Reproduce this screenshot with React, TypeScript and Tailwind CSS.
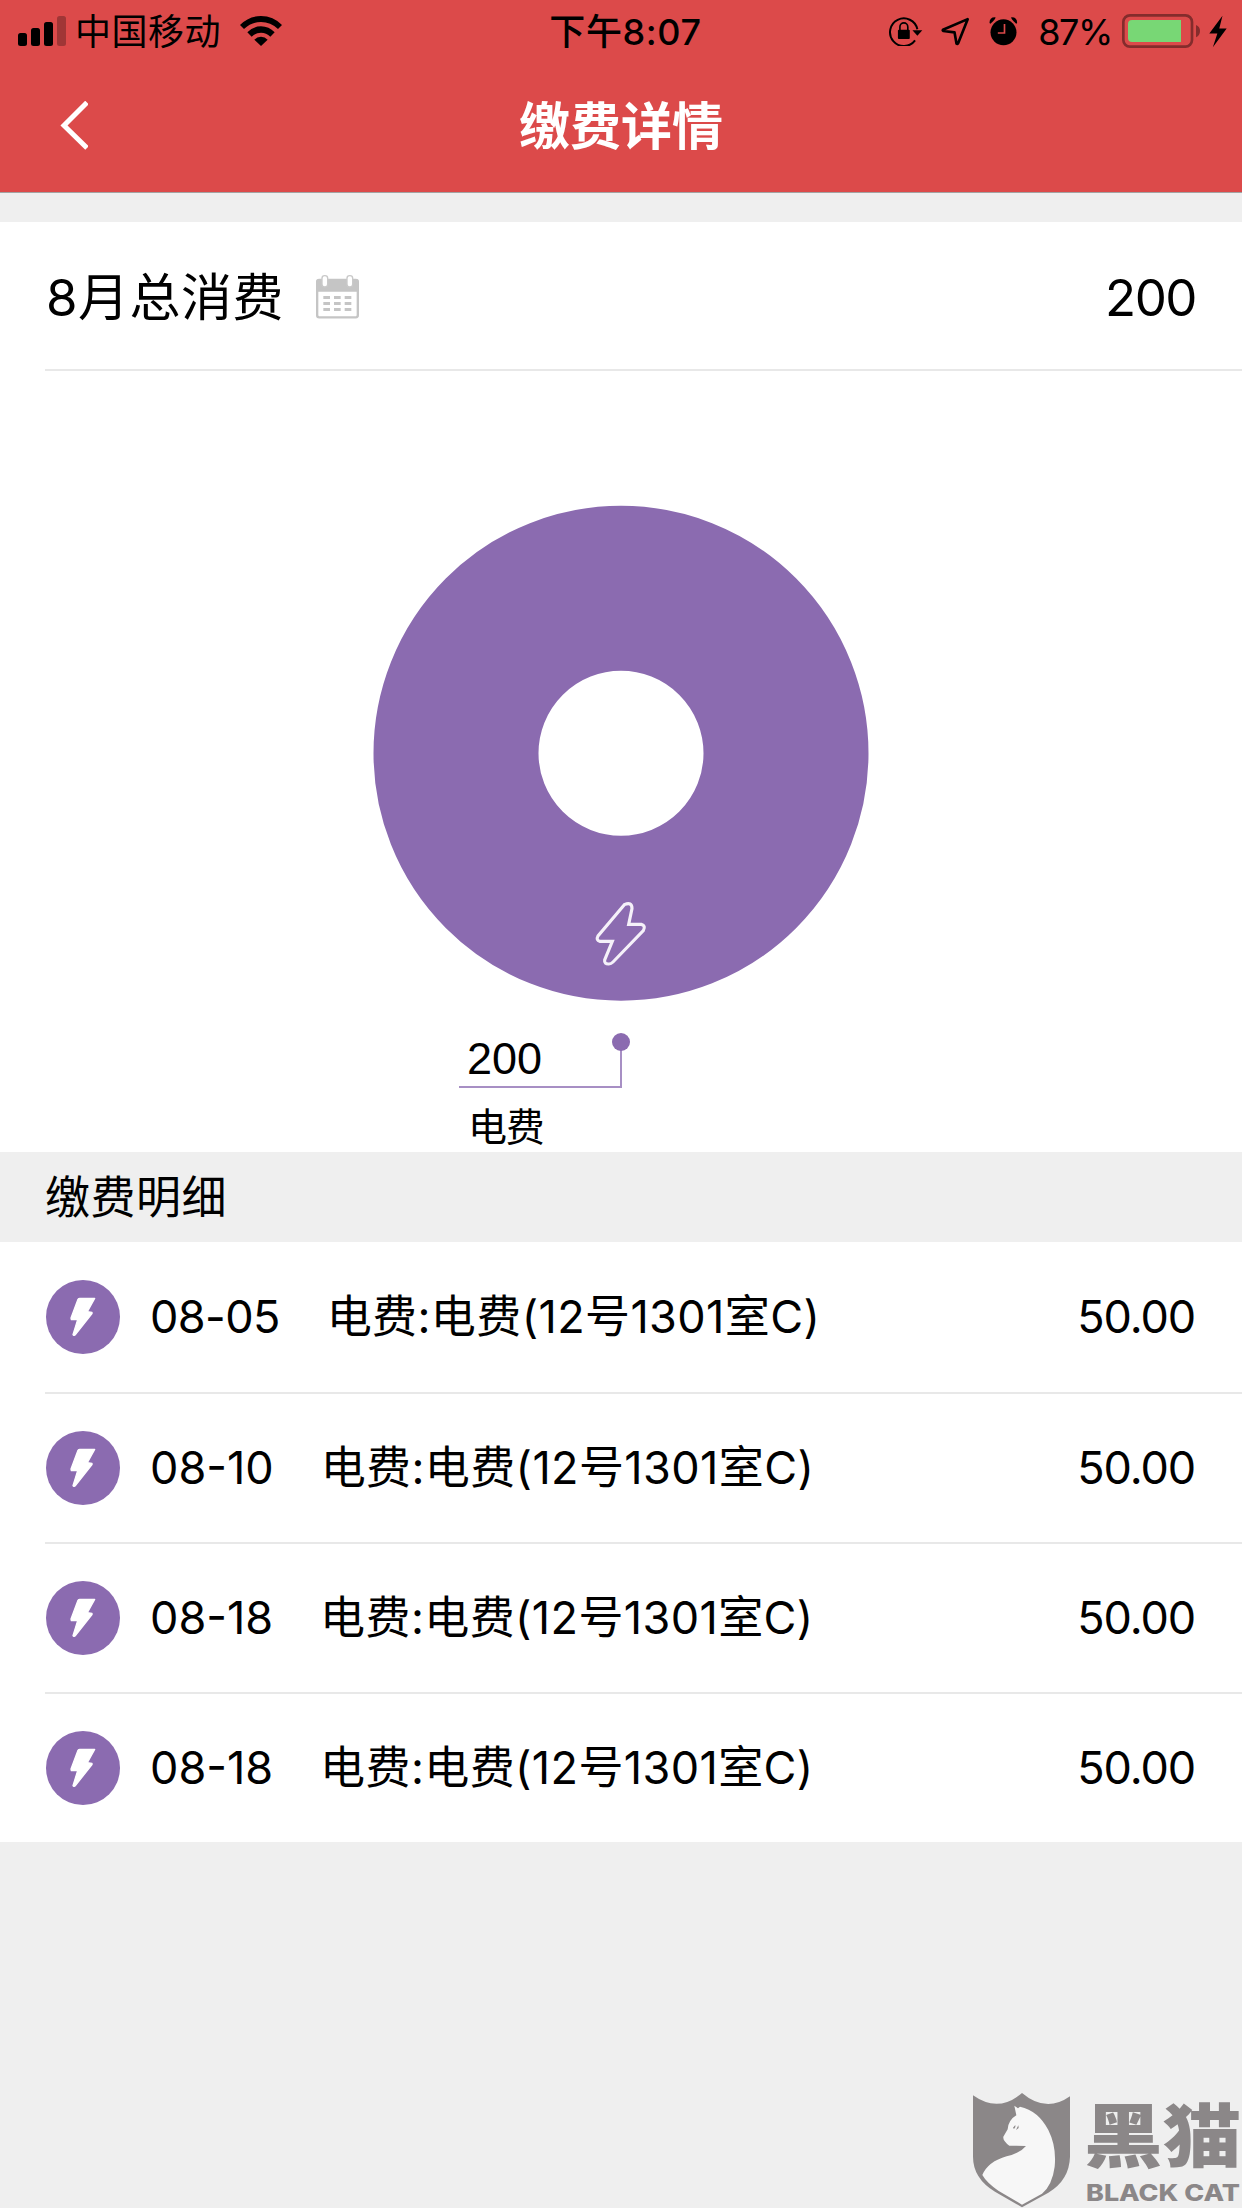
import React from 'react';

interface Payment {
  id: number;
  date: string;
  title: string;
  amount: string;
}

const payments: Payment[] = [
  { id: 1, date: '08-05', title: '电费:电费(12号1301室C)', amount: '50.00' },
  { id: 2, date: '08-10', title: '电费:电费(12号1301室C)', amount: '50.00' },
  { id: 3, date: '08-18', title: '电费:电费(12号1301室C)', amount: '50.00' },
  { id: 4, date: '08-18', title: '电费:电费(12号1301室C)', amount: '50.00' },
];

function SignalIcon() {
  return (
    <svg width="48" height="30" viewBox="0 0 48 30">
      <rect x="0" y="17" width="9" height="13" rx="2.5" />
      <rect x="13" y="12" width="9" height="18" rx="2.5" />
      <rect x="26" y="6" width="9" height="24" rx="2.5" />
      <rect x="39" y="0" width="9" height="30" rx="2.5" opacity="0.27" />
    </svg>
  );
}

function WifiIcon() {
  return (
    <svg width="42" height="30" viewBox="720 45 126 90">
      <path d="M720 72Q746 45 783 45T846 72L834 84Q812 63 783 63T732 84Z" />
      <path d="M742 94Q759 76 783 76T824 94L811 107Q799 95 783 95T755 107Z" />
      <path d="M763 116Q771 107 783 107T803 116L783 135Z" />
    </svg>
  );
}

function RotationLockIcon() {
  return (
    <svg width="35" height="30" viewBox="58 44 104 91">
      <path d="M139 118A42 42 0 1 1 146 84" fill="none" stroke="#000" strokeWidth="6" />
      <path d="M131 87H161L146 104Z" />
      <rect x="87" y="86" width="36" height="28" rx="3" />
      <path d="M93 88V77A12 12 0 0 1 117 77V88" fill="none" stroke="#000" strokeWidth="5" />
    </svg>
  );
}

function LocationIcon() {
  return (
    <svg width="29" height="29" viewBox="218 48 88 87">
      <path
        d="M299 54L224 86Q222 89 225 90L259 94L265 128Q268 131 270 127Z"
        fill="none"
        stroke="#000"
        strokeWidth="8"
        strokeLinejoin="round"
      />
    </svg>
  );
}

function AlarmIcon() {
  return (
    <svg width="29" height="30" viewBox="365 44 86 90">
      <circle cx="408" cy="93" r="39" />
      <path d="M366 65Q366 47 384 48Q385 53 369 67Z" />
      <path d="M449 65Q449 47 431 48Q430 53 446 67Z" />
      <path d="M391 95H411V68" fill="none" stroke="#dc4a4a" strokeWidth="5" />
    </svg>
  );
}

function BatteryIcon() {
  return (
    <svg width="78" height="34" viewBox="756 39 234 102">
      <rect x="760" y="43" width="206" height="94" rx="20" fill="none" stroke="#842c2c" strokeWidth="8" />
      <path d="M978 72Q990 77 990 90T978 109Z" fill="#842c2c" />
      <path d="M933 57V123H786Q774 123 774 111V69Q774 57 786 57Z" fill="#78d775" />
    </svg>
  );
}

function ChargeIcon() {
  return (
    <svg width="18" height="33" viewBox="1016 42 56 98">
      <path d="M1058 42L1017 97H1042L1028 140L1071 82H1048Z" />
    </svg>
  );
}

function CalendarIcon() {
  return (
    <svg width="43" height="44" viewBox="950 165 129 132">
      <rect x="953.5" y="180" width="122" height="112" rx="6" fill="#fff" stroke="#c5c5c5" strokeWidth="7" />
      <path d="M951 215V184Q951 178 958 178H1071Q1078 178 1078 184V215Z" fill="#c5c5c5" />
      <rect x="968" y="167" width="17" height="34" rx="8" fill="#fff" stroke="#c9c9c9" strokeWidth="4" />
      <rect x="1043" y="167" width="17" height="34" rx="8" fill="#fff" stroke="#c9c9c9" strokeWidth="4" />
      {[228, 246, 264].map((y) => (
        <g key={y} fill="#c5c5c5">
          <rect x="972" y={y} width="20" height="9" />
          <rect x="1004" y={y} width="20" height="9" />
          <rect x="1036" y={y} width="20" height="9" />
        </g>
      ))}
    </svg>
  );
}

function PowerIcon() {
  return (
    <svg className="shrink-0" width="74" height="74" viewBox="0 0 222 222">
      <circle cx="111" cy="111" r="111" fill="#8b6bb0" />
      <path
        d="M101 55H146L124 95L138 97L138 101L87 165Q82 168 81 164L95 119H76L75 114L96 58Q98 55 101 55Z"
        fill="#fff"
        stroke="#fff"
        strokeWidth="4"
        strokeLinejoin="round"
      />
    </svg>
  );
}

function StatusBar() {
  return (
    <div className="grid h-[60px] grid-cols-3 items-center text-[36px] leading-[60px] text-black">
      <div className="flex items-center pl-[18px]">
        <SignalIcon />
        <span className="ml-[9px] pt-[2px] tracking-[0.5px]">中国移动</span>
        <span className="ml-[19px]">
          <WifiIcon />
        </span>
      </div>
      <div className="pl-[9px] pt-[2px] text-center font-medium tracking-[0.6px]">下午8:07</div>
      <div className="flex items-center justify-end pr-[15px]">
        <RotationLockIcon />
        <span className="ml-[18px]">
          <LocationIcon />
        </span>
        <span className="ml-[19px]">
          <AlarmIcon />
        </span>
        <span className="ml-[20px] mr-[10px] pt-[2px] tracking-[-1.4px]">87%</span>
        <BatteryIcon />
        <span className="ml-[9px]">
          <ChargeIcon />
        </span>
      </div>
    </div>
  );
}

function DonutChart() {
  return (
    <div className="flex h-[781px] flex-col items-center pt-[134px]">
      <svg className="shrink-0" width="496" height="496" viewBox="0 0 496 496">
        <circle cx="248" cy="248.25" r="165" fill="none" stroke="#8b6bb0" strokeWidth="165" />
        {/* 电费 slice icon */}
        <path
          transform="translate(222 396) scale(.33333) translate(-465 -120)"
          d="M553 131L474 225Q467 238 480 241H517L494 297Q492 310 507 309Q513 309 519 303L610 209Q618 193 604 190H566L576 143Q576 121 553 131Z"
          fill="none"
          stroke="#f5f1f9"
          strokeWidth="9.5"
        />
      </svg>
      <div className="flex h-[120px] w-[324px] shrink-0 pt-[31px]">
        <div className="w-[153px]">
          <div className="h-[56px] border-b-2 border-[#a78fc4] pl-[8px] font-['Liberation_Sans'] text-[45px] leading-[54px]">
            200
          </div>
          <div className="pl-[9px] pt-[10px] text-[39px] leading-[58px] tracking-[-1.2px]">电费</div>
        </div>
        <svg width="18" height="56" viewBox="0 0 18 56">
          <path d="M0 55H9V10" fill="none" stroke="#a78fc4" strokeWidth="2" />
          <circle cx="9" cy="10" r="9" fill="#8b6bb0" />
        </svg>
      </div>
    </div>
  );
}

function PaymentRow({ payment, first }: { payment: Payment; first: boolean }) {
  return (
    <div
      className={`ml-[45px] flex h-[150px] items-center pl-px pr-[47px] text-[45px] ${
        first ? '' : 'border-t-2 border-[#e8e8e8]'
      }`}
    >
      <PowerIcon />
      <span className={`ml-[30px] ${first ? 'tracking-[-0.6px]' : 'tracking-[0px]'}`}>{payment.date}</span>
      <span className="ml-[47px] tracking-[0.4px]">{payment.title}</span>
      <span className="ml-auto tracking-[-1.1px]">{payment.amount}</span>
    </div>
  );
}

function Watermark() {
  return (
    <div className="flex h-[115px] w-[269px]">
      <svg width="97" height="115" viewBox="99 69 291 345">
        <path
          d="M99 76Q175 130 246 69Q318 130 390 79V260Q388 330 325 368L246 412L165 365Q99 325 99 260Z"
          fill="#8b8788"
        />
        <path
          d="M229 136L223 107L234 115L240 110Q295 122 325 180Q350 230 344 290Q337 345 306 371L246 404L175 362Q140 338 127 315Q144 275 200 259Q240 250 258 228L208 227Q188 212 190 200L203 178Q205 150 229 136Z"
          fill="#f7f7f7"
        />
        <path d="M219 173L226 165V171L222 177ZM228 180L235 166L236 174Z" fill="#8b8788" />
      </svg>
      <div className="ml-[16px] flex w-[156px] flex-col text-[#8b8788]">
        <span className="h-[87px] w-[138px] origin-left -translate-x-[2px] scale-x-[1.14] text-[69px] font-black leading-[89px]">
          黑猫
        </span>
        <span className="h-[26px] origin-left scale-x-[1.17] whitespace-nowrap text-[23px] font-extrabold leading-[26px]">
          BLACK CAT
        </span>
      </div>
    </div>
  );
}

export default function App() {
  return (
    <div className="flex h-[2208px] w-[1242px] flex-col overflow-hidden bg-[#efefef] font-['Inter','Noto_Sans_CJK_SC',sans-serif] text-black">
      <header className="h-[193px] border-b border-[#a3a3a3] bg-[#dc4a4a]">
        <StatusBar />
        <div className="grid h-[132px] grid-cols-3 items-center">
          <svg className="ml-[60px]" width="28" height="50" viewBox="0 0 28 50">
            <path d="M27 1.500L4 24.500L27 47" fill="none" stroke="#fff" strokeWidth="5" />
          </svg>
          <h1 className="pt-[2px] text-center text-[51px] font-bold leading-[130px] text-white">缴费详情</h1>
        </div>
      </header>

      <section className="mt-[29px] bg-white">
        <div className="ml-[45px] flex h-[149px] items-center border-b-2 border-[#e8e8e8] pl-px pr-[46px] text-[51px]">
          <span className="pt-[6px] tracking-[0.5px]">8月总消费</span>
          <span className="ml-[32px] pt-[3px]">
            <CalendarIcon />
          </span>
          <span className="ml-auto pt-[6px] tracking-[-1.5px]">200</span>
        </div>
        <DonutChart />
      </section>

      <h2 className="h-[90px] pl-[45px] pt-px text-[45px] leading-[90px] tracking-[0.5px]">缴费明细</h2>

      <section className="bg-white">
        {payments.map((payment, index) => (
          <PaymentRow key={payment.id} payment={payment} first={index === 0} />
        ))}
      </section>

      <footer className="flex flex-1 items-end justify-end">
        <Watermark />
      </footer>
    </div>
  );
}
